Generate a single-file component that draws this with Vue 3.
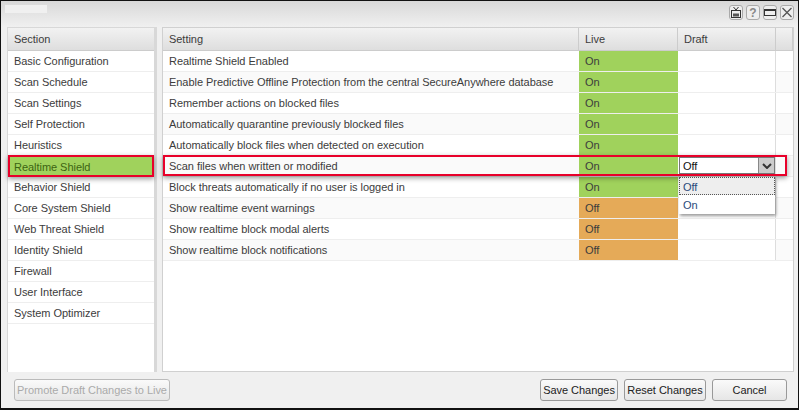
<script setup>
const sections = ['Basic Configuration','Scan Schedule','Scan Settings','Self Protection','Heuristics','Realtime Shield','Behavior Shield','Core System Shield','Web Threat Shield','Identity Shield','Firewall','User Interface','System Optimizer']
const rows = [
  ['Realtime Shield Enabled','On'],
  ['Enable Predictive Offline Protection from the central SecureAnywhere database','On'],
  ['Remember actions on blocked files','On'],
  ['Automatically quarantine previously blocked files','On'],
  ['Automatically block files when detected on execution','On'],
  ['Scan files when written or modified','On'],
  ['Block threats automatically if no user is logged in','On'],
  ['Show realtime event warnings','Off'],
  ['Show realtime block modal alerts','Off'],
  ['Show realtime block notifications','Off'],
]
</script>

<template>
  <div class="win">
    <div class="titlebar">
      <div class="tab"></div>
      <div class="tools">
        <span class="tool"><svg width="12" height="13" viewBox="0 0 12 13"><path d="M3.5 1l2.500 3 2.500-3" fill="none" stroke="#333"/><rect x="1.500" y="4.500" width="9" height="7" fill="none" stroke="#333"/><rect x="3" y="7.500" width="6" height="3" fill="#555"/></svg></span>
        <span class="tool q">?</span>
        <span class="tool"><svg width="12" height="13" viewBox="0 0 12 13"><rect x="0.500" y="3.500" width="11" height="6" fill="none" stroke="#333"/><rect x="0" y="3" width="12" height="2" fill="#333"/></svg></span>
        <span class="tool"><svg width="12" height="13" viewBox="0 0 12 13"><path d="M1.500 2l9 9M10.500 2l-9 9" stroke="#555" stroke-width="1.300"/></svg></span>
      </div>
    </div>
    <div class="main">
      <div class="panel left">
        <div class="head cell">Section</div>
        <div v-for="(s,i) in sections" :key="s" class="sec" :class="{sel:i===5}">{{ s }}</div>
        <div class="mark markl"></div>
      </div>
      <div class="panel right">
        <div class="thead">
          <div class="head cell c1">Setting</div>
          <div class="head cell c2">Live</div>
          <div class="head cell c3">Draft</div>
          <div class="head c4"></div>
        </div>
        <div v-for="(r,i) in rows" :key="r[0]" class="row" :class="{alt:i%2===1}">
          <div class="cell c1">{{ r[0] }}</div>
          <div class="cell c2" :class="r[1]==='On'?'on':'off'">{{ r[1] }}</div>
          <div class="c3 draft"></div>
          <div class="c4"></div>
        </div>
        <div class="mark markr"></div>
        <div class="combo">
          <div class="input">Off</div>
          <div class="arrow"><svg width="10" height="6" viewBox="0 0 10 6"><path d="M1 1l4 4 4-4" fill="none" stroke="#333" stroke-width="2"/></svg></div>
        </div>
        <div class="list">
          <div class="opt cur">Off</div>
          <div class="opt">On</div>
        </div>
      </div>
    </div>
    <div class="foot">
      <button class="btn dis">Promote Draft Changes to Live</button>
      <div class="grow"></div>
      <button class="btn save">Save Changes</button>
      <button class="btn reset">Reset Changes</button>
      <button class="btn cancel">Cancel</button>
    </div>
  </div>
</template>

<style>
html, body { margin: 0; background: #fff; }
</style>
<style scoped>
.win { width: 799px; height: 410px; box-sizing: border-box; border: 1px solid #111; border-bottom: 2px solid #111; background: #f0f0f0; font: 11px "Liberation Sans", Arial, sans-serif; letter-spacing: -0.04px; color: #3c3c3c; display: flex; flex-direction: column; overflow: hidden; }
.titlebar { height: 26px; flex: none; display: flex; justify-content: space-between; background: linear-gradient(#d8d8d8, #f0f0f0); }
.tab { width: 42px; height: 8px; margin: 4px 0 0 4px; background: #f0f0f0; }
.tools { display: flex; gap: 3px; padding: 4px 4px 0 0; }
.tool { width: 12px; height: 13px; border: 1px solid #aaa; border-radius: 3px; background: #eee; display: flex; align-items: center; justify-content: center; box-sizing: content-box; }
.q { font-weight: bold; font-size: 12px; color: #888; }
.main { height: 345px; flex: none; display: flex; gap: 5px; padding-left: 6px; }
.panel { position: relative; background: #fff; border: 1px solid #d0d0d0; box-sizing: border-box; height: 345px; }
.left { width: 150px; border-width: 1px 3px 0 1px; border-color: #d8d8d8; }
.right { width: 632px; }
.head { height: 22px; background: linear-gradient(#f2f2f2, #dedede); border-bottom: 1px solid #ccc; box-sizing: content-box; }
.cell { padding-left: 6px; line-height: 21px; box-sizing: border-box; }
.left .head { height: 23px; line-height: 22px; }
.sec { height: 21px; line-height: 20px; padding-left: 6px; border-bottom: 1px solid #eee; box-sizing: border-box; }
.sel { background: #a0d25c; color: #3c6412; border: 1px dotted #888; padding-left: 5px; }
.thead { display: flex; height: 23px; }
.thead .head { height: 23px; line-height: 22px; border-right: 1px solid #ccc; box-sizing: border-box; }
.row { display: flex; height: 21px; border-bottom: 1px solid #eee; box-sizing: border-box; }
.alt { background: #fafafa; }
.c1 { width: 416px; flex: none; }
.c2 { width: 99px; flex: none; }
.c3 { width: 98px; flex: none; }
.c4 { flex: 1; }
.row .c1, .row .c2 { line-height: 20px; }
.draft { border-right: 1px solid #ddd; box-sizing: border-box; background: #fff; }
.on { background: #a0d25c; }
.off { background: #e5aa58; }
.mark { position: absolute; border: 2px solid #e8002a; box-shadow: 0 2px 5px rgba(0,0,0,.4); box-sizing: border-box; }
.markl { left: 0; top: 127px; width: 146px; height: 22px; }
.markr { left: 0; top: 127px; width: 624px; height: 21px; }
.combo { position: absolute; left: 516px; top: 129px; width: 96px; height: 17px; display: flex; border: 1px solid #777; box-sizing: border-box; background: #fff; }
.input { flex: 1; padding-left: 3px; font-size: 11px; line-height: 17px; color: #111; }
.arrow { width: 16px; background: #ccc; border-left: 1px solid #888; display: flex; align-items: center; justify-content: center; box-sizing: border-box; }
.list { position: absolute; left: 516px; top: 149px; width: 96px; height: 37px; background: #fff; box-shadow: 1px 2px 3px rgba(0,0,0,.4); }
.opt { height: 18px; line-height: 20px; padding-left: 4px; box-sizing: border-box; color: #2a4a7a; }
.cur { background: #eee; border: 1px dotted #555; padding-left: 3px; line-height: 18px; }
.foot { flex: 1; display: flex; align-items: flex-start; gap: 6px; padding: 7px 11px 0 13px; }
.grow { flex: 1; }
.btn { height: 22px; padding: 0; border: 1px solid #999; border-radius: 3px; background: linear-gradient(#fafafa, #e6e6e6); font: 11px "Liberation Sans", Arial, sans-serif; letter-spacing: -0.04px; color: #222; }
.dis { width: 156px; color: #aaa; border-color: #bbb; }
.save { width: 78px; }
.reset { width: 82px; }
.cancel { width: 75px; }
</style>
